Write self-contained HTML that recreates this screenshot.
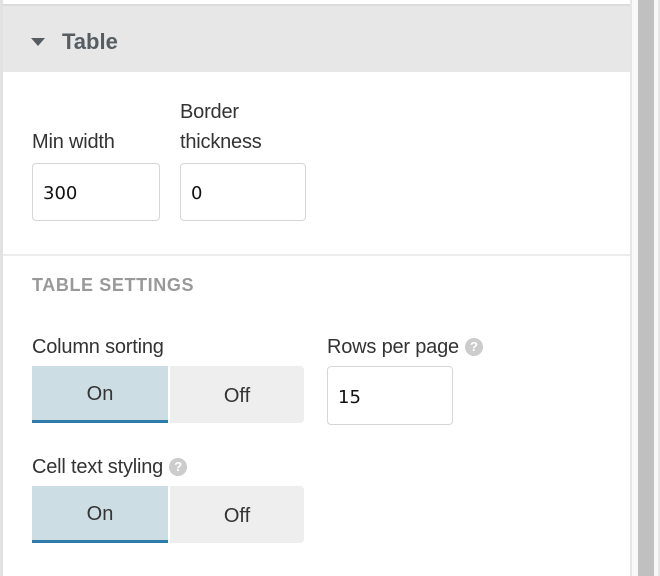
<!DOCTYPE html>
<html><head><style>
body{margin:0;width:660px;height:576px;position:relative;background:#fff;font-family:"Liberation Sans",sans-serif;overflow:hidden;color:#333}
.a{position:absolute}
.lbl{position:absolute;font-size:20px;color:#333;letter-spacing:-0.2px}
.inp{position:absolute;border:1px solid #d6d6d6;border-radius:4px;box-sizing:border-box;background:#fff;font-family:"DejaVu Sans",sans-serif;font-size:18px;color:#111;padding-left:10px;padding-top:3px;display:flex;align-items:center}
.btn{position:absolute;font-size:20px;display:flex;align-items:center;justify-content:center;box-sizing:border-box;color:#333;padding-top:3px}
.on{background:#cddde4;border-bottom:3px solid #2f7cab}
.off{background:#eeeeee;border-radius:0 4px 4px 0}
.q{display:inline-block;width:18px;height:18px;border-radius:50%;background:#ccc;color:#fff;font-size:13px;font-weight:bold;text-align:center;line-height:18px;vertical-align:2px;margin-left:6px}
</style></head><body>
<div class="a" style="left:0;top:0;width:3px;height:576px;background:#e2e2e2"></div>
<div class="a" style="left:630px;top:0;width:2px;height:576px;background:#e6e6e6"></div>
<div class="a" style="left:632px;top:0;width:6px;height:576px;background:#f8f8f8"></div>
<div class="a" style="left:638px;top:0;width:16px;height:576px;background:#c0c0c0"></div>
<div class="a" style="left:654px;top:0;width:4px;height:576px;background:#f8f8f8"></div>
<div class="a" style="left:658px;top:0;width:2px;height:576px;background:#e6e6e6"></div>
<div class="a" style="left:3px;top:4px;width:627px;height:2px;background:#dcdcdc"></div>
<div class="a" style="left:3px;top:6px;width:627px;height:66px;background:#e7e7e7"></div>
<svg class="a" style="left:30px;top:37px" width="16" height="10"><path d="M1 1H15L8 9Z" fill="#555d63"/></svg>
<div class="a" style="left:62px;top:29px;font-size:22px;font-weight:bold;color:#555d63">Table</div>
<div class="lbl" style="left:180px;top:101px">Border</div>
<div class="lbl" style="left:32px;top:131px">Min width</div>
<div class="lbl" style="left:180px;top:131px">thickness</div>
<div class="inp" style="left:32px;top:163px;width:128px;height:58px">300</div>
<div class="inp" style="left:180px;top:163px;width:126px;height:58px">0</div>
<div class="a" style="left:3px;top:254px;width:627px;height:2px;background:#ececec"></div>
<div class="a" style="left:32px;top:275px;font-size:18px;font-weight:bold;color:#999;letter-spacing:0.6px">TABLE SETTINGS</div>
<div class="lbl" style="left:32px;top:336px">Column sorting</div>
<div class="lbl" style="left:327px;top:336px">Rows per page<span class="q">?</span></div>
<div class="btn on" style="left:32px;top:366px;width:136px;height:57px">On</div>
<div class="btn off" style="left:170px;top:366px;width:134px;height:57px">Off</div>
<div class="inp" style="left:327px;top:366px;width:126px;height:59px">15</div>
<div class="lbl" style="left:32px;top:456px">Cell text styling<span class="q">?</span></div>
<div class="btn on" style="left:32px;top:486px;width:136px;height:57px">On</div>
<div class="btn off" style="left:170px;top:486px;width:134px;height:57px">Off</div>
</body></html>
